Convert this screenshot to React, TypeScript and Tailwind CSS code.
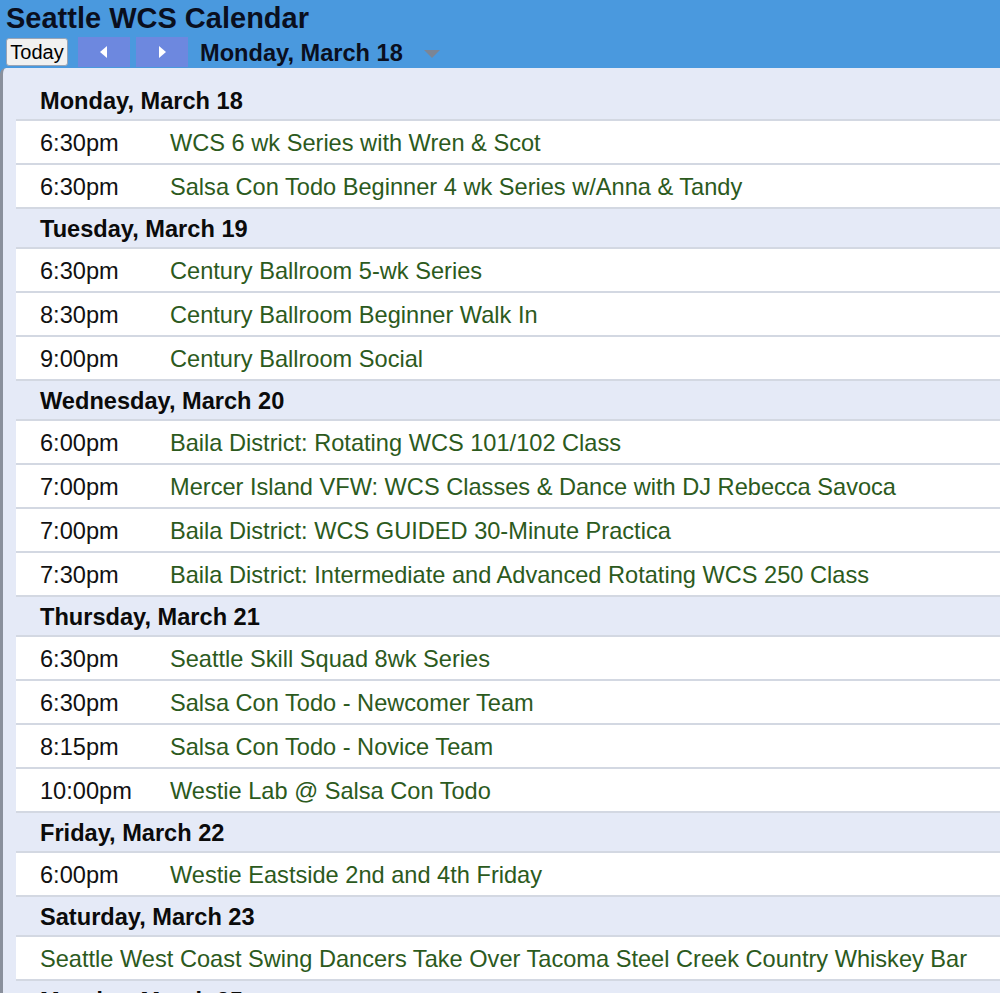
import React from "react";

type Ev = { time?: string; title: string };
type Day = { label: string; events: Ev[] };

const days: Day[] = [
  {
    label: "Monday, March 18",
    events: [
      { time: "6:30pm", title: "WCS 6 wk Series with Wren & Scot" },
      { time: "6:30pm", title: "Salsa Con Todo Beginner 4 wk Series w/Anna & Tandy" },
    ],
  },
  {
    label: "Tuesday, March 19",
    events: [
      { time: "6:30pm", title: "Century Ballroom 5-wk Series" },
      { time: "8:30pm", title: "Century Ballroom Beginner Walk In" },
      { time: "9:00pm", title: "Century Ballroom Social" },
    ],
  },
  {
    label: "Wednesday, March 20",
    events: [
      { time: "6:00pm", title: "Baila District: Rotating WCS 101/102 Class" },
      { time: "7:00pm", title: "Mercer Island VFW: WCS Classes & Dance with DJ Rebecca Savoca" },
      { time: "7:00pm", title: "Baila District: WCS GUIDED 30-Minute Practica" },
      { time: "7:30pm", title: "Baila District: Intermediate and Advanced Rotating WCS 250 Class" },
    ],
  },
  {
    label: "Thursday, March 21",
    events: [
      { time: "6:30pm", title: "Seattle Skill Squad 8wk Series" },
      { time: "6:30pm", title: "Salsa Con Todo - Newcomer Team" },
      { time: "8:15pm", title: "Salsa Con Todo - Novice Team" },
      { time: "10:00pm", title: "Westie Lab @ Salsa Con Todo" },
    ],
  },
  {
    label: "Friday, March 22",
    events: [{ time: "6:00pm", title: "Westie Eastside 2nd and 4th Friday" }],
  },
  {
    label: "Saturday, March 23",
    events: [
      { title: "Seattle West Coast Swing Dancers Take Over Tacoma Steel Creek Country Whiskey Bar" },
    ],
  },
  { label: "Monday, March 25", events: [] },
];

export default function App() {
  return (
    <div
      className="w-[1000px] h-[993px] overflow-hidden bg-[#4a99de] flex flex-col"
      style={{ fontFamily: '"Liberation Sans", Arial, sans-serif' }}
    >
      <div className="h-[68px] shrink-0 flex flex-col pl-[6px]">
        <div className="text-[29px] font-bold leading-[32px] text-[#0a0f1e] mt-[2px] whitespace-nowrap">
          Seattle WCS Calendar
        </div>
        <div className="flex items-center mt-[4px] h-[28px]">
          <button className="h-[28px] w-[62px] bg-[#f1f1f1] border border-[#9aa4b5] rounded-[3px] text-[20px] leading-none text-black flex items-center justify-center">
            Today
          </button>
          <div className="ml-[10px] w-[52px] h-[30px] bg-[#6d88df] flex items-center justify-center">
            <svg width="10" height="14" viewBox="0 0 10 14">
              <polygon points="8,1 1,7 8,13" fill="#ffffff" />
            </svg>
          </div>
          <div className="ml-[6px] w-[52px] h-[30px] bg-[#6d88df] flex items-center justify-center">
            <svg width="10" height="14" viewBox="0 0 10 14">
              <polygon points="2,1 9,7 2,13" fill="#ffffff" />
            </svg>
          </div>
          <div className="ml-[12px] pt-[3px] text-[23.6px] font-bold text-[#0a0f1e] leading-none whitespace-nowrap">
            Monday, March 18
          </div>
          <svg className="ml-[21px] mt-[3px]" width="16" height="10" viewBox="0 0 16 10">
            <polygon points="0,1 16,1 8,9" fill="#7b8595" />
          </svg>
        </div>
      </div>
      <div className="flex-1 bg-[#e5eaf7] border-l-[3px] border-[#8a909c] rounded-tl-[6px] pl-[13px] pt-[13px]">
        {days.map((d) => (
          <div key={d.label}>
            <div className="h-[40px] flex items-center pl-[24px] pt-[3px] border-b-2 border-[#d3d8e2] text-[23.6px] font-bold text-[#0b0b0b] whitespace-nowrap">
              {d.label}
            </div>
            {d.events.map((e, i) => (
              <div
                key={i}
                className="h-[44px] bg-white flex items-center pl-[24px] pt-[4px] border-b-2 border-[#d3d8e2] text-[23.6px] whitespace-nowrap"
              >
                {e.time && <span className="w-[130px] shrink-0 text-[#111]">{e.time}</span>}
                <span className="text-[#2c5a1d]">{e.title}</span>
              </div>
            ))}
          </div>
        ))}
      </div>
    </div>
  );
}
